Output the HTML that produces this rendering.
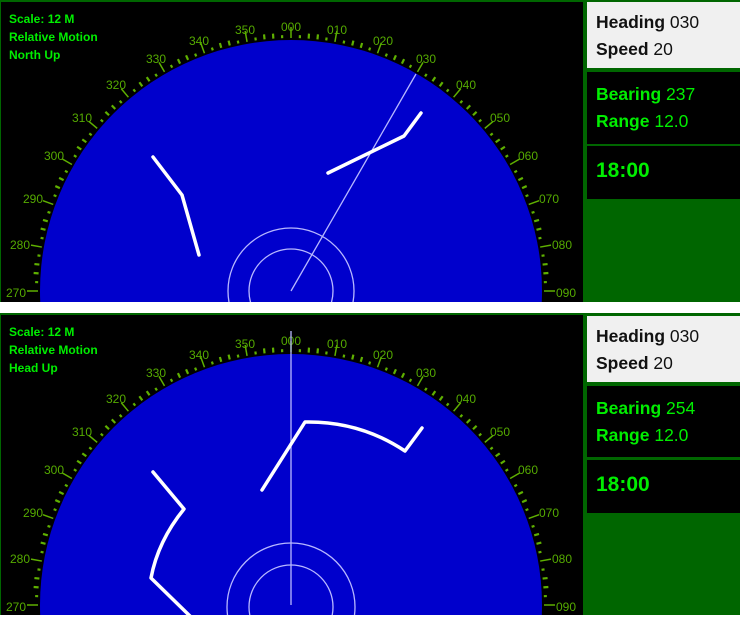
<!DOCTYPE html>
<html><head><meta charset="utf-8"><style>
html,body{margin:0;width:740px;height:620px;background:#fff;overflow:hidden;font-family:"Liberation Sans",Arial,sans-serif}
.p{position:absolute;left:0;width:740px;height:302px;background:#006600;overflow:hidden}
.rad{position:absolute;left:1px;top:2px;width:582px;height:300px;background:#000;overflow:hidden}
.rad svg{position:absolute;left:-1px;top:-2px}
.info{position:absolute;left:9px;top:10px;color:#00ee00;font-weight:bold;font-size:12px;line-height:18px}
.wb{position:absolute;left:587px;top:2px;width:153px;height:66px;background:#f0f0f0;font-size:17.5px;color:#111;line-height:27px;padding:0;}
.wb div,.bb div{padding-left:9px}
.bb{position:absolute;left:587px;width:153px;background:#000;color:#00ee00;font-size:17.5px;line-height:27px}
b{font-weight:bold}
</style></head><body>

<div class="p" style="top:0">
 <div class="rad">
  <svg width="584" height="302" class="r" data-h="0">
   <circle cx="291" cy="291" r="251" fill="#0000cc"/>
   <g class="ticks"></g>
   <g fill="#55aa00" font-size="12" text-anchor="middle" font-family="Liberation Sans, sans-serif">
    <text x="16" y="297">270</text><text x="20" y="249">280</text><text x="33" y="203">290</text><text x="54" y="160">300</text><text x="82" y="122">310</text><text x="116" y="89">320</text><text x="156" y="63">330</text><text x="199" y="45">340</text><text x="245" y="34">350</text><text x="291" y="31">000</text><text x="337" y="34">010</text><text x="383" y="45">020</text><text x="426" y="63">030</text><text x="466" y="89">040</text><text x="500" y="122">050</text><text x="528" y="160">060</text><text x="549" y="203">070</text><text x="562" y="249">080</text><text x="566" y="297">090</text>
   </g>
   <g fill="none" stroke="#b8b8ff" stroke-width="1.3"><circle cx="291" cy="291" r="42"/><circle cx="291" cy="291" r="63"/><line x1="291" y1="291" x2="416" y2="74"/></g>
   <g fill="none" stroke="#fff" stroke-width="3.5" stroke-linecap="round" stroke-linejoin="round">
    <polyline points="153,157 182,195 199,255"/>
    <polyline points="328,173 404,136 421,113"/>
   </g>
  </svg>
 </div>
 <div class="info">Scale: 12 M<br>Relative Motion<br>North Up</div>
 <div class="wb" style="top:2px;padding-top:7px;height:59px"><div><b>Heading</b> 030</div><div><b>Speed</b> 20</div></div>
 <div class="bb" style="top:72px;height:72px;padding-top:9px;box-sizing:border-box"><div><b>Bearing</b> 237</div><div><b>Range</b> 12.0</div></div>
 <div class="bb" style="top:146px;height:53px;font-size:21px;font-weight:bold;line-height:50px"><div>18:00</div></div>
</div>

<div class="p" style="top:313px">
 <div class="rad">
  <svg width="584" height="302" class="r">
   <circle cx="291" cy="292" r="251" fill="#0000cc"/>
   <g class="ticks"></g>
   <g fill="#55aa00" font-size="12" text-anchor="middle" font-family="Liberation Sans, sans-serif">
    <text x="16" y="298">270</text><text x="20" y="250">280</text><text x="33" y="204">290</text><text x="54" y="161">300</text><text x="82" y="123">310</text><text x="116" y="90">320</text><text x="156" y="64">330</text><text x="199" y="46">340</text><text x="245" y="35">350</text><text x="291" y="32">000</text><text x="337" y="35">010</text><text x="383" y="46">020</text><text x="426" y="64">030</text><text x="466" y="90">040</text><text x="500" y="123">050</text><text x="528" y="161">060</text><text x="549" y="204">070</text><text x="562" y="250">080</text><text x="566" y="298">090</text>
   </g>
   <g fill="none" stroke="#b8b8ff" stroke-width="1.3"><circle cx="291" cy="294" r="42"/><circle cx="291" cy="294" r="64"/><line x1="291" y1="292" x2="291" y2="18"/></g>
   <g fill="none" stroke="#fff" stroke-width="3.5" stroke-linecap="round" stroke-linejoin="round">
    <path d="M153,159 L184,196 Q158,228 151,265 L192,305"/>
    <path d="M262,177 L305,109 Q360,108 405,138 L422,115"/>
   </g>
  </svg>
 </div>
 <div class="info">Scale: 12 M<br>Relative Motion<br>Head Up</div>
 <div class="wb" style="top:3px;padding-top:7px;height:59px"><div><b>Heading</b> 030</div><div><b>Speed</b> 20</div></div>
 <div class="bb" style="top:73px;height:71px;padding-top:9px;box-sizing:border-box"><div><b>Bearing</b> 254</div><div><b>Range</b> 12.0</div></div>
 <div class="bb" style="top:147px;height:53px;font-size:21px;font-weight:bold;line-height:50px"><div>18:00</div></div>
</div>

<script>
document.querySelectorAll('svg.r').forEach(function(s,i){
 var cy=i?292:291,g=s.querySelector('.ticks'),h='';
 for(var a=-90;a<=90;a+=2){
  var t=a*Math.PI/180,sn=Math.sin(t),cs=Math.cos(t);
  var r1=253,r2=(a%10==0)?264:(Math.abs(a)%10==4||Math.abs(a)%10==6?258:256);
  var w=(a%10==0)?1.5:2.2;
  h+='<line x1="'+(291+r1*sn)+'" y1="'+(cy-r1*cs)+'" x2="'+(291+r2*sn)+'" y2="'+(cy-r2*cs)+'" stroke="#5fb000" stroke-width="'+w+'"/>';
 }
 g.innerHTML=h;
});
</script>
</body></html>
